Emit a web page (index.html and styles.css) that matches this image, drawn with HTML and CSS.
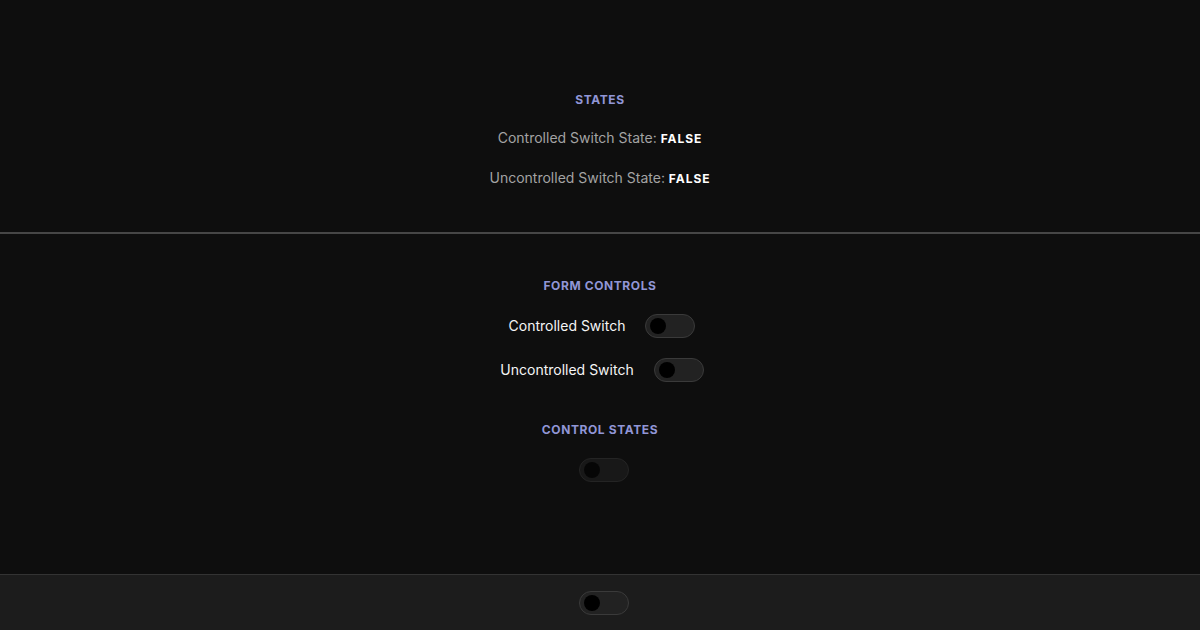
FILE: index.html
```html
<!DOCTYPE html>
<html lang="en">
<head>
    <meta charset="UTF-8">
    <meta name="viewport" content="width=device-width, initial-scale=1.0">
    <title>Switch Demo</title>
    <link rel="stylesheet" href="styles.css">
</head>
<body>
    <section class="states">
        <h2 class="section-title">States</h2>
        <p class="state-line">Controlled Switch State: <span class="state-value">false</span></p>
        <p class="state-line">Uncontrolled Switch State: <span class="state-value">false</span></p>
    </section>

    <section class="controls">
        <h2 class="section-title">Form Controls</h2>
        <div class="control-row labelled">
            <label class="control-label">Controlled Switch</label>
            <button class="switch" role="switch" aria-checked="false"><span class="thumb"></span></button>
        </div>
        <div class="control-row labelled">
            <label class="control-label">Uncontrolled Switch</label>
            <button class="switch" role="switch" aria-checked="false"><span class="thumb"></span></button>
        </div>

        <h2 class="section-title spaced">Control States</h2>
        <div class="control-row">
            <button class="switch" role="switch" aria-checked="false" disabled><span class="thumb"></span></button>
        </div>
    </section>

    <footer class="bottom-bar">
        <button class="switch" role="switch" aria-checked="false"><span class="thumb"></span></button>
    </footer>
</body>
</html>
```

FILE: styles.css
```css
body {
    margin: 0;
    font-family: Inter, "Noto Sans", sans-serif;
    background-color: #0e0e0e;
    color: #f2f2f2;
}

.states {
    padding: 92px 0 44px;
    display: flex;
    flex-direction: column;
    align-items: center;
    gap: 20px;
    border-bottom: 2px solid #464646;
}

.section-title {
    margin: 0;
    font-size: 12px;
    line-height: 16px;
    font-weight: 700;
    letter-spacing: 0.05em;
    text-transform: uppercase;
    color: #9196d6;
    text-align: center;
}

.state-line {
    margin: 0;
    font-size: 14px;
    line-height: 20px;
    height: 20px;
    color: #a3a3a3;
}

.state-value {
    font-size: 12px;
    line-height: 1;
    font-weight: 700;
    letter-spacing: 0.08em;
    text-transform: uppercase;
    color: #ffffff;
}

.controls {
    padding: 44px 0 92px;
    display: flex;
    flex-direction: column;
    align-items: center;
    gap: 20px;
}

.section-title.spaced {
    margin-top: 20px;
}

.control-row {
    display: flex;
    align-items: center;
    gap: 20px;
    padding-left: 8px;
}

.control-row.labelled {
    padding-left: 4px;
}

.control-label {
    font-size: 14px;
    line-height: 20px;
    color: #f5f5f5;
}

.switch {
    width: 50px;
    height: 24px;
    padding: 0;
    border: 1px solid #3a3a3a;
    border-radius: 12px;
    background-color: #222222;
    cursor: pointer;
    display: flex;
    align-items: center;
}

.thumb {
    display: block;
    width: 16px;
    height: 16px;
    margin-left: 4px;
    border-radius: 50%;
    background-color: #000000;
}

.switch:disabled {
    opacity: 0.5;
    cursor: not-allowed;
}

.bottom-bar {
    border-top: 1px solid #333333;
    background-color: #1c1c1c;
    padding: 16px 0 16px 8px;
    display: flex;
    justify-content: center;
}
```
